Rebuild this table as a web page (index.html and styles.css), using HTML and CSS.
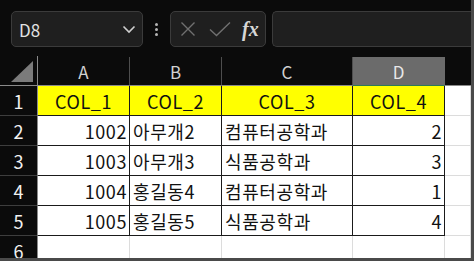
FILE: index.html
```html
<!DOCTYPE html>
<html lang="ko">

<head>
    <meta charset="UTF-8">
    <meta name="viewport" content="width=device-width, initial-scale=1.0">
    <title>Sheet1</title>
    <link rel="stylesheet" href="styles.css">
</head>

<body>
    <div class="frame">
        <!-- barra de fórmulas -->
        <div class="formula-bar">
            <div class="name-box">
                <span>D8</span>
                <svg class="chevron" width="14" height="9" viewBox="0 0 14 9">
                    <path d="M1.5 1.5 L7 7 L12.5 1.5" fill="none" stroke="#cfcfcf" stroke-width="1.6" />
                </svg>
            </div>
            <div class="dots"><i></i><i></i><i></i></div>
            <div class="fx-box">
                <svg width="16" height="16" viewBox="0 0 16 16">
                    <path d="M1.5 1.5 L14.5 14.5 M14.5 1.5 L1.5 14.5" stroke="#707070" stroke-width="1.4" />
                </svg>
                <svg width="22" height="16" viewBox="0 0 22 16">
                    <path d="M1 8.5 L7.5 14.5 L21 1.5" fill="none" stroke="#707070" stroke-width="1.4" />
                </svg>
                <span class="fx">fx</span>
            </div>
            <div class="formula-input"></div>
        </div>

        <!-- planilha -->
        <div class="sheet">
            <div class="corner"><div class="tri"></div></div>
            <div class="col-head">A</div>
            <div class="col-head">B</div>
            <div class="col-head">C</div>
            <div class="col-head selected">D</div>
            <div class="col-head last"></div>

            <div class="row-head">1</div>
            <div class="cell yellow center">COL_1</div>
            <div class="cell yellow center">COL_2</div>
            <div class="cell yellow center">COL_3</div>
            <div class="cell yellow center">COL_4</div>
            <div class="cell empty"></div>

            <div class="row-head">2</div>
            <div class="cell num">1002</div>
            <div class="cell">아무개2</div>
            <div class="cell">컴퓨터공학과</div>
            <div class="cell num">2</div>
            <div class="cell empty"></div>

            <div class="row-head">3</div>
            <div class="cell num">1003</div>
            <div class="cell">아무개3</div>
            <div class="cell">식품공학과</div>
            <div class="cell num">3</div>
            <div class="cell empty"></div>

            <div class="row-head">4</div>
            <div class="cell num">1004</div>
            <div class="cell">홍길동4</div>
            <div class="cell">컴퓨터공학과</div>
            <div class="cell num">1</div>
            <div class="cell empty"></div>

            <div class="row-head">5</div>
            <div class="cell num">1005</div>
            <div class="cell">홍길동5</div>
            <div class="cell">식품공학과</div>
            <div class="cell num">4</div>
            <div class="cell empty"></div>

            <div class="row-head">6</div>
            <div class="cell empty"></div>
            <div class="cell empty"></div>
            <div class="cell empty"></div>
            <div class="cell empty"></div>
            <div class="cell empty"></div>
        </div>
    </div>
</body>

</html>
```

FILE: styles.css
```css
* {
    box-sizing: border-box;
    margin: 0;
    padding: 0;
}

body {
    background-color: #0b0b0b;
    font-family: "Noto Sans CJK KR", "Noto Sans", sans-serif;
}

.frame {
    width: 474px;
    height: 261px;
    overflow: hidden;
    border-right: 3px solid #4a4a4a;
    border-bottom: 3px solid #4a4a4a;
    background-color: #0b0b0b;
}

.formula-bar {
    height: 56px;
    display: flex;
    align-items: flex-start;
    padding: 11px 0 0 11px;
}

.name-box,
.fx-box,
.formula-input {
    height: 36px;
    background-color: #1f1f1f;
    border: 1px solid #3b3b3b;
    border-radius: 5px;
}

.name-box {
    width: 132px;
    display: flex;
    align-items: center;
    justify-content: space-between;
    padding: 0 6px 0 7px;
    color: #e2e2e2;
    font-size: 17px;
}

.dots {
    width: 27px;
    height: 36px;
    display: flex;
    flex-direction: column;
    align-items: center;
    justify-content: center;
    gap: 2px;
}

.dots i {
    width: 3px;
    height: 3px;
    background-color: #b4b4b4;
    border-radius: 50%;
}

.fx-box {
    width: 96px;
    display: flex;
    align-items: center;
    gap: 13px;
    padding-left: 9px;
}

.fx {
    font-family: "Liberation Serif", serif;
    font-style: italic;
    font-weight: bold;
    font-size: 20px;
    color: #d6d6d6;
    margin-left: -2px;
}

.formula-input {
    flex: 1;
    margin-left: 6px;
    border-right: none;
    border-radius: 5px 0 0 5px;
}

.sheet {
    display: grid;
    grid-template-columns: 38px 92px 92px 131px 92px 1fr;
    grid-auto-rows: 30px;
}

.corner {
    position: relative;
    border-right: 1px solid #8a8a8a;
    border-bottom: 1px solid #8a8a8a;
}

.tri {
    position: absolute;
    right: 4px;
    bottom: 3px;
    width: 0;
    height: 0;
    border-left: 22px solid transparent;
    border-bottom: 21px solid #7b7b7b;
}

.col-head {
    display: flex;
    align-items: center;
    justify-content: center;
    color: #d2d2d2;
    font-size: 17px;
    border-right: 1px solid #4e4e4e;
    border-bottom: 1px solid #8a8a8a;
    margin-top: 1px;
}

.col-head.selected {
    background-color: #6b6b6b;
    color: #e8e8e8;
    border-bottom: 1px solid #2c7a55;
    border-right: 1px solid #6b6b6b;
}

.col-head.last {
    border-right: none;
}

.row-head {
    display: flex;
    align-items: center;
    justify-content: center;
    color: #f2f2f2;
    font-size: 18px;
    border-right: 1px solid #8a8a8a;
    border-bottom: 1px solid #3e3e3e;
}

.cell {
    display: flex;
    align-items: center;
    padding: 0 3px;
    background-color: #ffffff;
    color: #111;
    font-size: 18px;
    letter-spacing: 0.6px;
    white-space: nowrap;
    border-right: 1px solid #1a1a1a;
    border-bottom: 1px solid #1a1a1a;
}

.cell.yellow {
    background-color: #ffff00;
}

.cell.center {
    justify-content: center;
}

.cell.num {
    justify-content: flex-end;
    padding-right: 2px;
}

.cell.empty {
    border-right: 1px solid #dcdcdc;
    border-bottom: 1px solid #dcdcdc;
}
```
